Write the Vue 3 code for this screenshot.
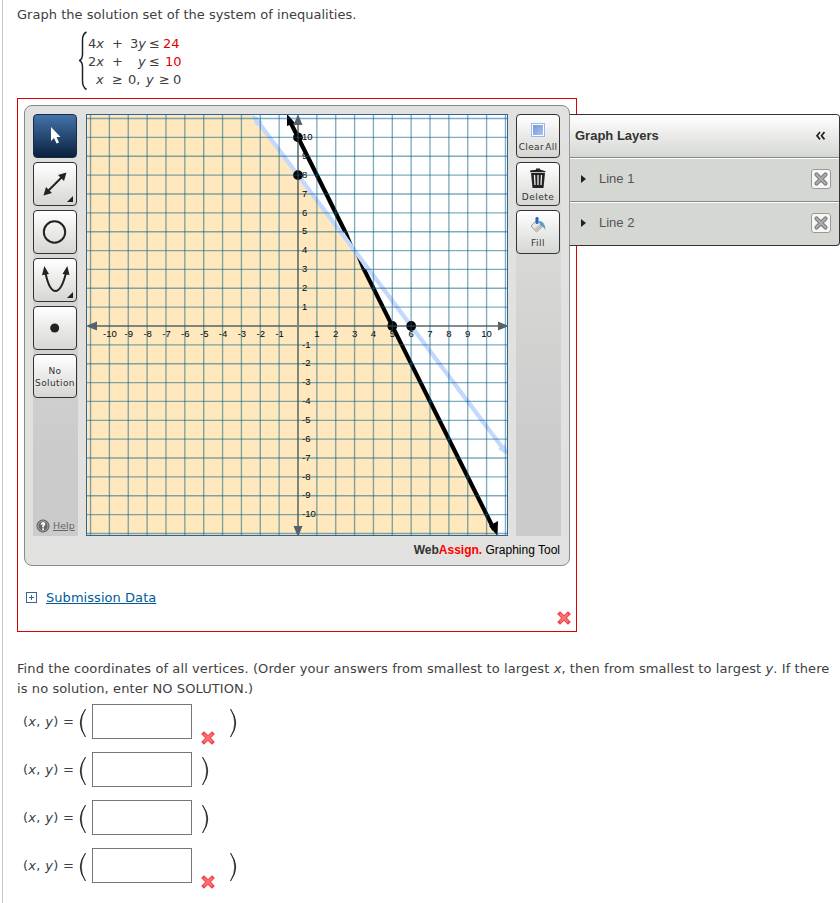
<script setup>
const UNIT = 18.86
const C = 212
const px = (n) => C + n * UNIT
const py = (n) => C - n * UNIT
const ticks = []
for (let i = -11; i <= 11; i++) if (i !== 0) ticks.push(i)
const labels = ticks.filter((n) => Math.abs(n) <= 10)
const answers = [true, false, false, true]
const layers = ['Line 1', 'Line 2']
</script>

<template>
  <main class="page">
    <p class="prompt">Graph the solution set of the system of inequalities.</p>
    <div class="system">
      <svg class="brace" width="10" height="60" viewBox="0 0 10 60">
        <path d="M7.500 1Q3.500 3 3.500 9V23Q3.500 28 .5 29.500Q3.500 31 3.500 36V50Q3.500 56 7.500 58.500" fill="none" stroke="#222" stroke-width="1.500" />
      </svg>
      <div class="equations">
        <div class="eq"><span class="c24">4<i>x</i></span><span class="c18">+</span><span class="c19">3<i>y</i></span><span class="c14">≤</span><b>24</b></div>
        <div class="eq"><span class="c24">2<i>x</i></span><span class="c26">+</span><span class="c11"><i>y</i></span><span class="c16">≤</span><b>10</b></div>
        <div class="eq last"><span class="c16"><i>x</i></span><span class="c16">≥</span><span class="c18">0,</span><span class="c13"><i>y</i></span><span class="c14">≥</span><span>0</span></div>
      </div>
    </div>

    <section class="question">
      <div class="tool">
        <div class="workspace">
          <div class="bar left">
            <button class="btn active">
              <svg width="42" height="42" viewBox="0 0 42 42"><path d="M17 12V26L20 23L22.600 28.600L25 27.600L22.500 22H26.500Z" fill="#fff" /></svg>
            </button>
            <button class="btn">
              <svg width="42" height="42" viewBox="0 0 42 42"><path d="M13 29L29 13" stroke="#222" stroke-width="2" /><path d="M9.500 32.500L12 24L18 30ZM32.500 9.500L24 12L30 18Z" fill="#222" /><path d="M39 33V39H33Z" fill="#222" /></svg>
            </button>
            <button class="btn">
              <svg width="42" height="42" viewBox="0 0 42 42"><circle cx="20.500" cy="21" r="10.700" fill="none" stroke="#222" stroke-width="2" /></svg>
            </button>
            <button class="btn">
              <svg width="42" height="42" viewBox="0 0 42 42"><path d="M11.500 14C14 26 17 32 21.500 32S29 26 32 14" fill="none" stroke="#222" stroke-width="2" /><path d="M10.300 7L15 15L8 16.300ZM33.300 7L35.500 16L28.500 15Z" fill="#222" /><path d="M39 33V39H33Z" fill="#222" /></svg>
            </button>
            <button class="btn">
              <svg width="42" height="42" viewBox="0 0 42 42"><circle cx="20.700" cy="21" r="4.500" fill="#222" /></svg>
            </button>
            <button class="btn label two"><span>No</span><span>Solution</span></button>
            <div class="help">
              <svg width="14" height="14" viewBox="0 0 14 14"><circle cx="7" cy="7" r="6" fill="#666" stroke="#555" stroke-width="1" /><circle cx="7" cy="7" r="5" fill="none" stroke="#aaa" /><path d="M4.500 5.800Q5 3 7.300 3Q9.500 3.200 9.300 5.200Q9 6.500 7.800 7.500V8.500H6.300V6.500L7.400 5.500ZM6.300 9.300H7.900V11H6.300Z" fill="#fff" /></svg>
              <a>Help</a>
            </div>
          </div>

          <svg class="graph" width="422" height="422" viewBox="0 0 422 422">
            <defs>
              <clipPath id="frame"><rect x="1" y="1" width="420" height="420" /></clipPath>
            </defs>
            <rect width="422" height="422" fill="#fff" />
            <g clip-path="url(#frame)">
              <polygon :points="`0,0 ${px(-2.430)},0 ${px(3)},${py(4)} ${px(10.620)},423 0,423`" fill="#ffe8bd" />
              <line :x1="px(-.5)" :y1="py(11)" :x2="px(2.500)" :y2="py(5)" stroke="#000" stroke-width="4.200" />
              <polygon :points="`${px(2.500) - 1.900},${py(5) - 1} ${px(2.500) + 1.900},${py(5) - 1} ${px(3) + .5},${py(4)}`" fill="#000" />
              <polygon :points="`${px(3) - .5},${py(4)} ${px(3.500) + 1.900},${py(3) + 1} ${px(3.500) - 1.900},${py(3) + 1}`" fill="#000" />
              <line :x1="px(3.500)" :y1="py(3)" :x2="px(10.400)" :y2="py(-10.800)" stroke="#000" stroke-width="4.200" />
              <path d="M201 0L209 9L201 12Z M411.500 422L403 412L412 407Z" fill="#000" />
              <line :x1="px(-2.300)" :y1="py(11.067)" :x2="px(11)" :y2="py(-6.667)" stroke="#c2d8ff" stroke-width="4.200" />
              <path d="M166 0L177 8L170 12Z M422 341L412 335L419 330Z" fill="#c2d8ff" />
              <g font-family="Liberation Sans, Arial, sans-serif" font-size="9.500" fill="#000">
                <text v-for="n in labels" :key="'x' + n" :x="px(n) + (n < 0 ? .5 : 0)" :y="223" text-anchor="middle">{{ n }}</text>
                <text v-for="n in labels" :key="'y' + n" x="216" :y="py(n) + 2.700">{{ n }}</text>
              </g>
              <circle :cx="px(0)" :cy="py(10)" r="4.900" /><circle :cx="px(0)" :cy="py(8)" r="4.900" />
              <circle :cx="px(5)" :cy="py(0)" r="4.900" /><circle :cx="px(6)" :cy="py(0)" r="4.900" />
              <g stroke="#005b80" stroke-opacity=".5" stroke-width="1.350">
                <line v-for="n in ticks" :key="'v' + n" :x1="px(n)" :x2="px(n)" y1="0" y2="423" />
                <line v-for="n in ticks" :key="'h' + n" :y1="py(n)" :y2="py(n)" x1="0" x2="423" />
              </g>
              <path d="M212 4V418M4 212H418" stroke="#33474d" stroke-opacity=".62" stroke-width="2" />
              <path d="M212 0L216.500 11H207.500ZM212 423L216.500 412H207.500ZM0 212L11 207.500V216.500ZM423 212L412 207.500V216.500Z" fill="#54636b" />
            </g>
            <rect x=".5" y=".5" width="421" height="421" fill="none" stroke="#30639b" />
          </svg>

          <div class="bar right">
            <button class="btn label clear">
              <svg width="14" height="14" viewBox="0 0 14 14"><defs><linearGradient id="sq" x2="1" y2="1"><stop stop-color="#7097dd" /><stop offset="1" stop-color="#a9c3ee" /></linearGradient></defs><rect x=".5" y=".5" width="13" height="13" fill="#fff" stroke="#9db8e3" /><rect x="2" y="2" width="10" height="10" fill="url(#sq)" /></svg>
              <span>Clear All</span>
            </button>
            <button class="btn label delete">
              <svg width="18" height="22" viewBox="0 0 18 22"><path d="M2 6H16L14.500 21H3.500Z" fill="#222" /><path d="M1 5.200L1.200 3.500L7 2.800V1.500H11V2.500L16.500 4.300V5.200Z" fill="#222" /><path d="M5.500 8L6 18M9 8V18M12.500 8L12 18" stroke="#eee" stroke-width="1.300" /></svg>
              <span>Delete</span>
            </button>
            <button class="btn label fill">
              <svg width="18" height="16" viewBox="0 0 18 16"><path d="M2 9L8 3L14 9L7.500 15Z" fill="#e8e8e8" stroke="#999" /><path d="M5 12L12 7L14 9L7.500 15Z" fill="#c2c2c2" /><path d="M10 4Q16 4 16.500 13Q14 9 11 8Z" fill="#5aa0cc" /><rect x="6.500" y="0" width="3" height="7" rx="1.300" fill="#2a69bd" /></svg>
              <span>Fill</span>
            </button>
          </div>
        </div>
        <div class="brand"><strong>Web<em>Assign.</em></strong> Graphing Tool</div>

        <aside class="layers">
          <header><span>Graph Layers</span>
            <svg width="11" height="10" viewBox="0 0 11 10"><path d="M5 1L2 4.700L5 8.400M9.500 1L6.500 4.700L9.500 8.400" fill="none" stroke="#222" stroke-width="1.700" /></svg>
          </header>
          <div v-for="l in layers" :key="l" class="layer">
            <svg width="5" height="8" viewBox="0 0 5 8"><path d="M0 0L5 4L0 8Z" fill="#222" /></svg>
            <span>{{ l }}</span>
            <svg class="close" width="20" height="20" viewBox="0 0 20 20"><rect x=".5" y=".5" width="19" height="19" rx="2.500" fill="#f7f7f7" stroke="#999" /><path d="M5.500 5.500L14.500 14.500M14.500 5.500L5.500 14.500" stroke="#777" stroke-width="4.200" stroke-linecap="round" /><path d="M5.500 5.500L14.500 14.500M14.500 5.500L5.500 14.500" stroke="#aaa" stroke-width="2.400" stroke-linecap="round" /></svg>
          </div>
        </aside>
      </div>

      <div class="submission">
        <svg width="11" height="11" viewBox="0 0 11 11"><rect x=".5" y=".5" width="10" height="10" fill="#fff" stroke="#336699" /><path d="M3 5.500H8M5.500 3V8" stroke="#336699" /></svg>
        <a>Submission Data</a>
      </div>
      <svg class="wrong" width="14" height="14" viewBox="0 0 14 14"><path d="M3 3L11 11M11 3L3 11" stroke="#ed4549" stroke-width="4" stroke-linecap="square" stroke-linejoin="round" /><path d="M3 3L11 11M11 3L3 11" stroke="#ff7373" stroke-width="2" /></svg>
    </section>

    <p class="find">Find the coordinates of all vertices. (Order your answers from smallest to largest <i>x</i>, then from smallest to largest <i>y</i>. If there<br />is no solution, enter NO SOLUTION.)</p>

    <div class="answers">
      <div v-for="(bad, i) in answers" :key="i" class="answer">
        <span class="pair">(<i>x</i>, <i>y</i>) =</span>
        <svg class="lp" width="8" height="30" viewBox="0 0 8 30"><path d="M6.500 1Q-4 15 6.500 29Q-2 15 6.500 1Z" fill="#222" stroke="#222" stroke-width=".7" /></svg>
        <input type="text" />
        <svg v-if="bad" class="mark" width="14" height="14" viewBox="0 0 14 14"><path d="M3 3L11 11M11 3L3 11" stroke="#ed4549" stroke-width="4" stroke-linecap="square" /><path d="M3 3L11 11M11 3L3 11" stroke="#ff7373" stroke-width="2" /></svg>
        <svg class="rp" :class="{ far: bad }" width="8" height="30" viewBox="0 0 8 30"><path d="M1.500 1Q12 15 1.500 29Q10 15 1.500 1Z" fill="#222" stroke="#222" stroke-width=".7" /></svg>
      </div>
    </div>
  </main>
</template>

<style>
body { background: #fff; overflow: hidden; }
</style>
<style scoped>
* { box-sizing: border-box; }
svg { display: block; flex: none; }
.page { width: 838px; height: 903px; margin-left: 2px; border-left: 1px solid #c8c8c8; padding: 5px 0 0 14px; font: 13px/20px Verdana, "DejaVu Sans", sans-serif; color: #404040; }
p { margin: 0; white-space: nowrap; }
.prompt { height: 20px; letter-spacing: .025px; }
.system { display: flex; height: 73px; padding: 6px 0 0 62px; }
.equations { padding-top: 4px; margin-left: -1px; }
.eq { display: flex; height: 18px; line-height: 18px; white-space: pre; }
.eq b { font-weight: normal; color: #d00; }
.eq.last { padding-left: 8px; }
.c11 { width: 11px; } .c13 { width: 13px; } .c14 { width: 14px; } .c16 { width: 16px; }
.c18 { width: 18px; } .c19 { width: 19px; } .c24 { width: 24px; } .c26 { width: 26px; }
.question { width: 560px; height: 534px; border: 1px solid #d00; padding: 6px; display: flex; flex-direction: column; }
.tool { position: relative; width: 546px; height: 461px; border: 1px solid #8b8b8b; border-radius: 8px; background: #e1e1df; padding: 8px; }
.workspace { display: flex; height: 422px; }
.bar { width: 45px; background: linear-gradient(#e1e1df 0%, #cbcbcb 80%); display: flex; flex-direction: column; gap: 4px; height: 422px; }
.graph { margin: 0 8px; }
.btn { width: 44px; height: 44px; flex: none; padding: 0; border: 1px solid #333; border-radius: 4px; background: linear-gradient(#fff, #d5d7d2); display: flex; flex-direction: column; align-items: center; font: 9px/12px "DejaVu Sans", sans-serif; color: #333; letter-spacing: .5px; white-space: nowrap; }
.active { background: linear-gradient(#4473ab, #0a203d); border-color: #182c48; }
.two { justify-content: center; padding-top: 2px; letter-spacing: .4px; }
.clear { padding-top: 8px; gap: 4px; font-size: 9px; letter-spacing: .35px; word-spacing: -2px; }
.delete { padding-top: 4px; gap: 2px; }
.fill { padding-top: 6px; gap: 4px; }
.help { margin-top: auto; padding: 0 0 3px 3px; display: flex; gap: 3px; align-items: center; font: 9.500px/14px Verdana, "DejaVu Sans", sans-serif; color: #666; }
.help a, .submission a { text-decoration: underline; }
.brand { margin: 5px 1px 0 0; text-align: right; font: 12px/18px "Liberation Sans", Arial, sans-serif; color: #000; white-space: nowrap; }
.brand strong { color: #333; }
.brand em { font-style: normal; color: #f00; }
.layers { position: absolute; left: 544px; top: 8px; width: 271px; height: 132px; border: 1px solid #333; border-left-color: #999; border-radius: 0 4px 4px 0; background: #d5d7d2; font: 13px/20px "Liberation Sans", Arial, sans-serif; color: #555; overflow: hidden; }
.layers header { height: 42px; display: flex; justify-content: space-between; align-items: center; padding: 0 13px 1px 5px; font-weight: bold; color: #333; background: linear-gradient(#fff, #d5d7d2); }
.layer { height: 44px; border-top: 1px solid #888; box-shadow: inset 0 1px #fff; display: flex; align-items: center; padding: 0 8px 2px 11px; }
.layer span { margin-left: 13px; }
.close { margin-left: auto; }
.submission { display: flex; align-items: center; height: 20px; margin: 21px 0 0 2px; gap: 9px; letter-spacing: .05px; }
.submission a { color: #005b9a; position: relative; top: 1px; }
.wrong { margin: 4px -1px 0 auto; }
.find { margin-top: 27px; letter-spacing: .093px; }
.answers { padding: 5px 0 0 6px; display: flex; flex-direction: column; gap: 13px; }
.answer { display: flex; align-items: center; height: 35px; }
.pair { width: 56px; white-space: nowrap; font-size: 13px; letter-spacing: .28px; }
.lp { margin-top: 2px; }
input { width: 100px; height: 35px; margin: 0 0 0 5px; padding: 2px; border: 1px solid #767676; background: #fff; }
.mark { margin: 32px 0 0 9px; }
.rp { margin: 2px 0 0 9px; }
.rp.far { margin-left: 14px; }
</style>
